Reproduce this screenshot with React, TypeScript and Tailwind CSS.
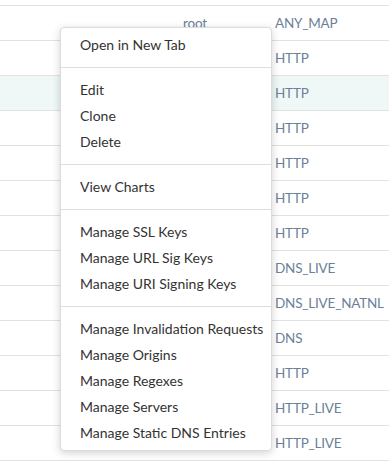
import React from "react";

const rows: { a?: string; b: string; hl?: boolean }[] = [
  { a: "root", b: "ANY_MAP" },
  { b: "HTTP" },
  { b: "HTTP", hl: true },
  { b: "HTTP" },
  { b: "HTTP" },
  { b: "HTTP" },
  { b: "HTTP" },
  { b: "DNS_LIVE" },
  { b: "DNS_LIVE_NATNL" },
  { b: "DNS" },
  { b: "HTTP" },
  { b: "HTTP_LIVE" },
  { b: "HTTP_LIVE" },
];

const groups = [
  ["Open in New Tab"],
  ["Edit", "Clone", "Delete"],
  ["View Charts"],
  ["Manage SSL Keys", "Manage URL Sig Keys", "Manage URI Signing Keys"],
  [
    "Manage Invalidation Requests",
    "Manage Origins",
    "Manage Regexes",
    "Manage Servers",
    "Manage Static DNS Entries",
  ],
];

export default function App() {
  return (
    <div
      className="relative w-[389px] h-[467px] overflow-hidden bg-white"
      style={{ fontFamily: "Lato, 'Noto Sans', sans-serif" }}
    >
      <div className="h-[6px] border-b border-[#e2e2e2]" />
      {rows.map((r, i) => (
        <div
          key={i}
          className={`h-[35px] border-b border-[#e2e2e2] flex items-center text-[13.5px] tracking-[-0.2px] text-[#6a8198] ${
            r.hl ? "bg-[#eff8f7]" : "bg-white"
          }`}
        >
          <div className="w-[183px] shrink-0" />
          <div className="w-[92px] shrink-0">{r.a ?? ""}</div>
          <div className="whitespace-nowrap">{r.b}</div>
        </div>
      ))}
      <div className="absolute left-[60px] top-[27px] w-[212px] bg-white rounded-[4px] border border-[#dcdcdc] shadow-[0_2px_8px_rgba(0,0,0,0.18)] py-[4px]">
        {groups.map((g, gi) => (
          <div key={gi}>
            {gi > 0 && <div className="my-[9px] h-px bg-[#dedede]" />}
            {g.map((t) => (
              <div
                key={t}
                className="h-[26px] flex items-center pl-[19px] pb-px text-[14px] text-[#333333] whitespace-nowrap"
              >
                {t}
              </div>
            ))}
          </div>
        ))}
      </div>
    </div>
  );
}
